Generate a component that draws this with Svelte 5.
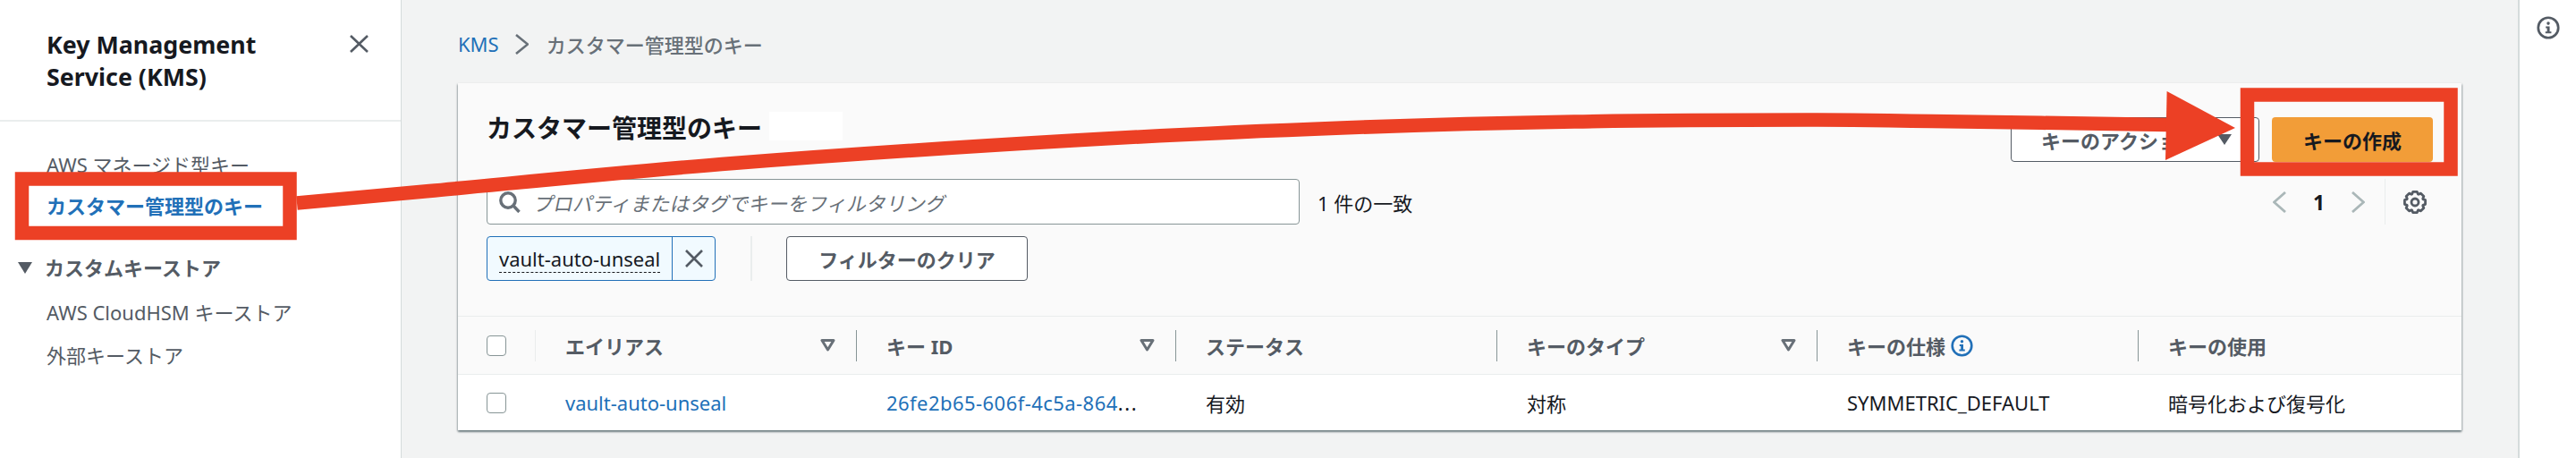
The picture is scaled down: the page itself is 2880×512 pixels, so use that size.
<script>
  const columns = [
    { label: 'エイリアス', filter: true, quiet: true },
    { label: 'キー ID', filter: true },
    { label: 'ステータス', filter: false },
    { label: 'キーのタイプ', filter: true },
    { label: 'キーの仕様', filter: false, info: true },
    { label: 'キーの使用', filter: false },
  ];

  // spine of the hand drawn arrow, read off the screenshot
  const spine = [
    [332, 227], [480, 213.5], [820, 182.5], [1200, 157], [1500, 143],
    [1760, 136], [2020, 134], [2160, 135.5], [2424, 139.5],
  ];

  const smooth = (pts) => {
    let d = `M${pts[0][0]} ${pts[0][1]}`;
    for (let i = 0; i < pts.length - 1; i++) {
      const p0 = pts[i - 1] || pts[i];
      const p1 = pts[i];
      const p2 = pts[i + 1];
      const p3 = pts[i + 2] || p2;
      const c1 = [p1[0] + (p2[0] - p0[0]) / 6, p1[1] + (p2[1] - p0[1]) / 6];
      const c2 = [p2[0] - (p3[0] - p1[0]) / 6, p2[1] - (p3[1] - p1[1]) / 6];
      d += ` C${c1[0]} ${c1[1]} ${c2[0]} ${c2[1]} ${p2[0]} ${p2[1]}`;
    }
    return d;
  };

  const gear = () => {
    const teeth = 8;
    let d = '';
    for (let i = 0; i < teeth; i++) {
      const a = (i / teeth) * Math.PI * 2;
      const pt = (r, off) => {
        const x = 13 + r * Math.cos(a + off);
        const y = 13 + r * Math.sin(a + off);
        return `${x.toFixed(2)} ${y.toFixed(2)}`;
      };
      d += `${i ? 'L' : 'M'}${pt(9.6, -0.36)} L${pt(11.8, -0.2)} L${pt(11.8, 0.2)} L${pt(9.6, 0.36)} `;
    }
    return d + 'Z';
  };

  const arrowPath = smooth(spine);
  const gearPath = gear();
</script>

<div class="page">
  <aside class="side">
    <div class="side-head">
      <h2>Key Management<br />Service (KMS)</h2>
      <svg class="close" width="21" height="20" viewBox="0 0 21 20">
        <path d="M1 1 L20 19 M20 1 L1 19" />
      </svg>
    </div>
    <nav>
      <a class="item first" href="#a">AWS マネージド型キー</a>
      <a class="item active" href="#b">カスタマー管理型のキー</a>
      <div class="section">
        <svg width="16" height="13" viewBox="0 0 16 13"><path d="M0 0 H16 L8 13 Z" /></svg>
        <span>カスタムキーストア</span>
      </div>
      <a class="item hsm" href="#c">AWS CloudHSM キーストア</a>
      <a class="item ext" href="#d">外部キーストア</a>
    </nav>
  </aside>

  <main class="main">
    <div class="crumbs">
      <a href="#k">KMS</a>
      <svg width="15" height="23" viewBox="0 0 15 23"><path d="M1 1 L14 11.5 L1 22" /></svg>
      <span>カスタマー管理型のキー</span>
    </div>

    <section class="card">
      <div class="card-head">
        <div class="title-row">
          <h1>カスタマー管理型のキー</h1>
          <div class="actions">
            <button class="btn menu">
              <span>キーのアクション</span>
              <svg width="16" height="12" viewBox="0 0 16 12"><path d="M0 0 H16 L8 12 Z" /></svg>
            </button>
            <button class="btn primary">キーの作成</button>
          </div>
        </div>

        <div class="filter-row">
          <div class="search">
            <svg width="24" height="24" viewBox="0 0 24 24">
              <circle cx="10" cy="10" r="8.2" />
              <path d="M16 16 L22.5 23" />
            </svg>
            <span class="hint">プロパティまたはタグでキーをフィルタリング</span>
          </div>
          <span class="count">1 件の一致</span>
          <div class="pager">
            <svg class="chev" width="15" height="24" viewBox="0 0 15 24"><path d="M14 1 L1.5 12 L14 23" /></svg>
            <b>1</b>
            <svg class="chev" width="15" height="24" viewBox="0 0 15 24"><path d="M1 1 L13.5 12 L1 23" /></svg>
            <div class="pager-sep">
              <svg class="gear" width="26" height="26" viewBox="0 0 26 26">
                <path d={gearPath} />
                <circle cx="13" cy="13" r="4" />
              </svg>
            </div>
          </div>
        </div>

        <div class="token-row">
          <div class="token">
            <span class="token-text"><u>vault-auto-unseal</u></span>
            <span class="token-x">
              <svg width="20" height="20" viewBox="0 0 20 20"><path d="M1 1 L19 19 M19 1 L1 19" /></svg>
            </span>
          </div>
          <div class="token-sep"></div>
          <button class="btn clear">フィルターのクリア</button>
        </div>
      </div>

      <div class="grid head">
        <div class="check-cell"><span class="check"></span></div>
        {#each columns as col}
          <div class="th" class:quiet={col.quiet}>
            <span>{col.label}</span>
            {#if col.info}
              <svg class="info blue" width="25" height="25" viewBox="0 0 25 25">
                <circle cx="12.5" cy="12.5" r="10.8" />
                <circle class="dot" cx="12.5" cy="7.8" r="1.7" />
                <path class="stem" d="M9.8 11 H14 V16.6 H15.8 V18.6 H9.4 V16.6 H11.2 V13 H9.8 Z" />
              </svg>
            {/if}
            {#if col.filter}
              <svg class="caret" width="17" height="14" viewBox="0 0 17 14"><path d="M2 1.5 H15 L8.5 12 Z" /></svg>
            {/if}
          </div>
        {/each}
      </div>

      <div class="grid row">
        <div class="check-cell"><span class="check"></span></div>
        <div class="td"><a href="#v">vault-auto-unseal</a></div>
        <div class="td clip"><a href="#i">26fe2b65-606f-4c5a-864</a><span>...</span></div>
        <div class="td">有効</div>
        <div class="td">対称</div>
        <div class="td">SYMMETRIC_DEFAULT</div>
        <div class="td">暗号化および復号化</div>
      </div>
    </section>
  </main>

  <aside class="tools">
    <svg class="info dark" width="26" height="26" viewBox="0 0 25 25">
      <circle cx="12.5" cy="12.5" r="10.8" />
      <circle class="dot" cx="12.5" cy="7.8" r="1.7" />
      <path class="stem" d="M9.8 11 H14 V16.6 H15.8 V18.6 H9.4 V16.6 H11.2 V13 H9.8 Z" />
    </svg>
  </aside>

  <!-- annotations pasted on top of the screenshot -->
  <svg class="marks" width="2880" height="512" viewBox="0 0 2880 512">
    <rect class="patch" x="860" y="125" width="82" height="32" />
    <rect class="box" x="24.5" y="200" width="299.5" height="60.5" />
    <rect class="box" x="2512.5" y="106" width="227.5" height="83" />
    <path class="shaft" d={arrowPath} />
    <path class="head" d="M2422.6 102 L2499 143 L2421 179 Z" />
  </svg>
</div>

<style>
  :global(body) {
    margin: 0;
    background: #f2f3f3;
  }

  .page {
    position: relative;
    display: grid;
    grid-template-columns: 449px 1fr 65px;
    width: 2880px;
    height: 512px;
    overflow: hidden;
    font-family: 'Noto Sans', 'Noto Sans CJK JP', sans-serif;
    font-size: 22px;
    color: #16191f;
  }

  a {
    color: #2170b8;
    text-decoration: none;
  }

  .side {
    background: #fff;
    border-right: 1px solid #d5dbdb;
    box-sizing: border-box;
  }

  .side-head {
    display: flex;
    justify-content: space-between;
    box-sizing: border-box;
    height: 136px;
    padding: 32px 36px 0 52px;
    border-bottom: 2px solid #eaeded;
  }

  .side-head h2 {
    margin: 0;
    font-size: 26.8px;
    line-height: 36px;
    font-weight: 700;
  }

  .close {
    margin-top: 7px;
  }

  .close path {
    fill: none;
    stroke: #545b64;
    stroke-width: 2.6;
  }

  nav {
    display: flex;
    flex-direction: column;
    padding-left: 52px;
  }

  .item {
    line-height: 32px;
    color: #545b64;
  }

  .first {
    margin-top: 32px;
  }

  .active {
    margin-top: 14px;
    color: #2170b8;
    font-weight: 700;
  }

  .section {
    display: flex;
    align-items: center;
    gap: 14px;
    margin: 37px 0 0 -32px;
    line-height: 32px;
    font-weight: 700;
    color: #545b64;
  }

  .section path {
    fill: #545b64;
  }

  .hsm {
    margin-top: 18px;
  }

  .ext {
    margin-top: 16px;
  }

  .main {
    padding: 33px 63px 0;
    background: #f2f3f3;
  }

  .crumbs {
    display: flex;
    align-items: center;
    height: 32px;
    color: #687078;
    font-weight: 500;
  }

  .crumbs a {
    font-weight: 400;
  }

  .crumbs svg {
    margin: 0 20px 0 18px;
  }

  .crumbs path {
    fill: none;
    stroke: #687078;
    stroke-width: 2.6;
  }

  .card {
    margin-top: 28px;
    background: #fff;
    box-shadow: 0 2px 2px rgba(0, 28, 36, 0.4), 1px 1px 2px rgba(0, 28, 36, 0.2), -1px 1px 2px rgba(0, 28, 36, 0.2);
  }

  .card-head {
    box-sizing: border-box;
    height: 260px;
    padding: 38px 32px 0;
    background: #fafafa;
  }

  .title-row {
    display: flex;
    justify-content: space-between;
    height: 50px;
  }

  .title-row h1 {
    margin: 0;
    font-size: 28px;
    line-height: 24px;
    font-weight: 700;
  }

  .actions {
    display: flex;
    gap: 14px;
  }

  .btn {
    box-sizing: border-box;
    height: 50px;
    border: 1.5px solid #545b64;
    border-radius: 4px;
    background: #fff;
    color: #545b64;
    font: inherit;
    font-weight: 700;
  }

  .menu {
    display: flex;
    align-items: center;
    width: 278px;
    padding: 0 30px 0 33px;
    justify-content: space-between;
  }

  .menu path {
    fill: #545b64;
  }

  .primary {
    width: 180px;
    border: none;
    background: #f29d38;
    color: #16191f;
  }

  .filter-row {
    display: flex;
    align-items: center;
    height: 51px;
    margin-top: 19px;
  }

  .search {
    display: flex;
    align-items: center;
    gap: 16px;
    box-sizing: border-box;
    width: 909px;
    height: 51px;
    padding-left: 13px;
    background: #fff;
    border: 1.5px solid #879596;
    border-radius: 4px;
    color: #687078;
  }

  .hint {
    display: inline-block;
    transform: skewX(-12deg);
  }

  .search svg {
    fill: none;
    stroke: #687078;
    stroke-width: 3.4;
    margin-top: 1px;
  }

  .count {
    margin-left: 20px;
  }

  .pager {
    display: flex;
    align-items: center;
    margin-left: auto;
    margin-right: 7px;
    height: 51px;
  }

  .chev path {
    fill: none;
    stroke: #aab7b8;
    stroke-width: 2.8;
  }

  .pager b {
    width: 73px;
    text-align: center;
    font-size: 23px;
  }

  .pager-sep {
    display: flex;
    align-items: center;
    height: 51px;
    margin-left: 22px;
    padding-left: 20px;
    border-left: 1.5px solid #eaeded;
  }

  .gear {
    fill: none;
    stroke: #545b64;
    stroke-width: 2.8;
    stroke-linejoin: round;
  }

  .token-row {
    display: flex;
    align-items: stretch;
    height: 50px;
    margin-top: 13px;
  }

  .token {
    display: flex;
    box-sizing: border-box;
    width: 256px;
    background: #f1faff;
    border: 1.5px solid #2170b8;
    border-radius: 4px;
  }

  .token-text {
    display: flex;
    align-items: center;
    box-sizing: border-box;
    width: 207px;
    padding-left: 13px;
    border-right: 1.5px solid #2170b8;
  }

  .token-text u {
    text-decoration: none;
    line-height: 30px;
    border-bottom: 1.5px dashed #16191f;
  }

  .token-x {
    display: flex;
    flex: 1;
    align-items: center;
    justify-content: center;
  }

  .token-x path {
    fill: none;
    stroke: #545b64;
    stroke-width: 2.6;
  }

  .token-sep {
    margin: 0 38px 0 39px;
    border-left: 2px solid #eaeded;
  }

  .clear {
    width: 270px;
  }

  .grid {
    display: grid;
    grid-template-columns: 86px 359px 357px 359px 358px 359px 1fr;
    align-items: center;
  }

  .head {
    box-sizing: border-box;
    height: 66px;
    background: #fafafa;
    border-top: 1.5px solid #eaeded;
    border-bottom: 1.5px solid #eaeded;
  }

  .row {
    height: 62px;
    background: #fff;
  }

  .check-cell {
    display: flex;
    padding-left: 32px;
  }

  .check {
    box-sizing: border-box;
    width: 22px;
    height: 23px;
    background: #fff;
    border: 1.5px solid #879596;
    border-radius: 4px;
  }

  .th {
    display: flex;
    align-items: center;
    box-sizing: border-box;
    height: 35px;
    padding: 0 23px 0 33px;
    border-left: 1.5px solid #879596;
    color: #545b64;
    font-weight: 700;
  }

  .th.quiet {
    border-left-color: #eaeded;
  }

  .caret {
    margin-left: auto;
    fill: none;
    stroke: #687078;
    stroke-width: 3;
    stroke-linejoin: round;
  }

  .info {
    margin-left: 6px;
    fill: none;
    stroke-width: 2.6;
  }

  .info .dot,
  .info .stem {
    stroke: none;
  }

  .blue circle {
    stroke: #2170b8;
  }

  .blue .dot,
  .blue .stem {
    fill: #2170b8;
  }

  .dark circle {
    stroke: #545b64;
  }

  .dark .dot,
  .dark .stem {
    fill: #545b64;
  }

  .td {
    padding-left: 34px;
    white-space: nowrap;
  }

  .clip {
    letter-spacing: 0.45px;
  }

  .clip span {
    letter-spacing: 1.6px;
  }

  .tools {
    padding: 18px 0 0 19px;
    background: #fff;
    border-left: 2px solid #d5dbdb;
    box-sizing: border-box;
  }

  .tools .info {
    margin: 0;
  }

  .marks {
    position: absolute;
    left: 0;
    top: 0;
    pointer-events: none;
  }

  .patch {
    fill: #fff;
  }

  .box {
    fill: none;
    stroke: #ec4025;
    stroke-width: 15.5;
  }

  .shaft {
    fill: none;
    stroke: #ec4025;
    stroke-width: 15.5;
  }

  .head {
    fill: #ec4025;
  }
</style>
